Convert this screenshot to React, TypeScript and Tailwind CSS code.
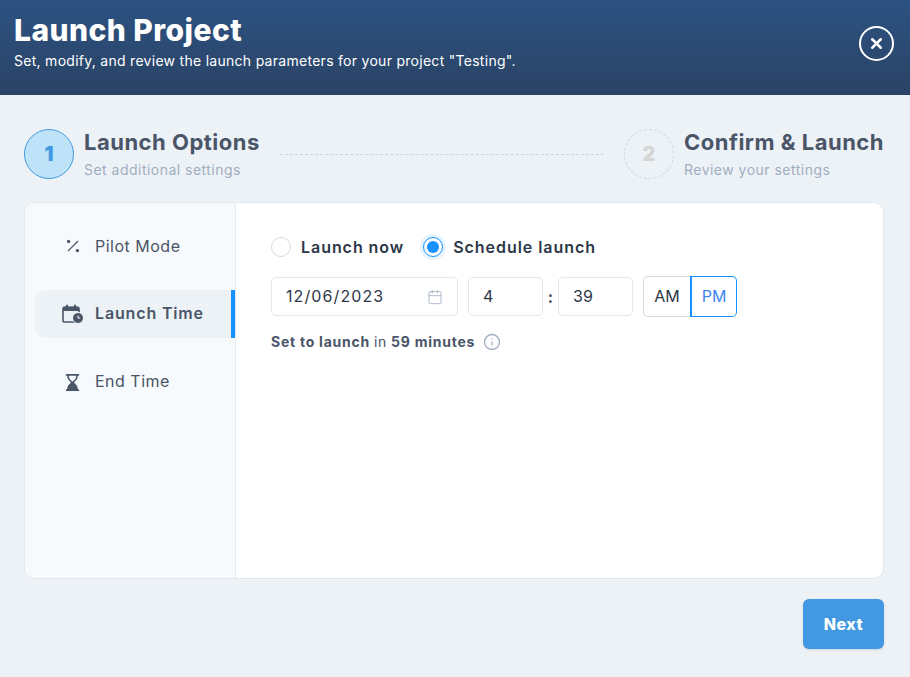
import { Calendar, Info, X } from 'lucide-react';

function PercentIcon() {
  return (
    <svg viewBox="0 0 16 16" className="w-[16px] h-[16px] text-[#4a5568]" fill="currentColor">
      <circle cx="3.6" cy="3.4" r="1.7" />
      <circle cx="12.4" cy="12.6" r="1.7" />
      <path d="M12.6 2.6l.9.9L3.4 13.6l-.9-.9z" />
    </svg>
  );
}

function CalendarClockIcon() {
  return (
    <svg viewBox="0 0 22 20" className="w-[22px] h-[20px]">
      <path d="M2 3.5h14a1 1 0 0 1 1 1V17a1 1 0 0 1-1 1H2a1 1 0 0 1-1-1V4.500a1 1 0 0 1 1-1z" fill="none" stroke="#4a5568" strokeWidth="1.600" />
      <path d="M1 3.500a1 1 0 0 1 1-1h14a1 1 0 0 1 1 1V7H1z" fill="#4a5568" />
      <rect x="4" y="0.500" width="2" height="4" rx="1" fill="#4a5568" />
      <rect x="12" y="0.500" width="2" height="4" rx="1" fill="#4a5568" />
      <circle cx="16" cy="14" r="5.500" fill="#4a5568" stroke="#f7fafc" strokeWidth="1" />
      <path d="M16 11.500V14h2.200" fill="none" stroke="#fff" strokeWidth="1" />
    </svg>
  );
}

function HourglassIcon() {
  return (
    <svg viewBox="0 0 16 20" className="w-[15px] h-[19px]">
      <path d="M1 1h14v1.800h-1.300c0 3-1.700 5.300-4.200 7.200 2.500 1.900 4.200 4.200 4.200 7.200H15V19H1v-1.800h1.300c0-3 1.700-5.300 4.200-7.200-2.500-1.900-4.200-4.200-4.200-7.200H1z" fill="#4a5568" />
      <path d="M4 2.800h8c0 2.700-1.600 4.700-4 6.200-2.400-1.500-4-3.500-4-6.200z" fill="#f7fafc" />
    </svg>
  );
}

function Step({ num, title, sub, active }: { num: string; title: string; sub: string; active?: boolean }) {
  return (
    <div className="flex items-center gap-[10px]">
      <div
        className={
          active
            ? 'w-[50px] h-[50px] rounded-full border border-[#4299e1] bg-[#bee3f8] text-[#4299e1] flex items-center justify-center text-[20px] font-black'
            : 'w-[50px] h-[50px] rounded-full border border-dashed border-[#cbd5e0] text-[#d4d4d4] flex items-center justify-center text-[20px] font-black'
        }
      >
        {num}
      </div>
      <div>
        <div className="text-[22px] leading-[26px] font-bold text-[#4a5568] tracking-[0.5px]">{title}</div>
        <div className="text-[14px] leading-[20px] mt-[5px] text-[#a0aec0] tracking-[0.48px]">{sub}</div>
      </div>
    </div>
  );
}

export default function App() {
  return (
    <div className="w-[910px] h-[677px] bg-[#edf2f7] flex flex-col font-['Inter','Liberation_Sans',sans-serif] overflow-hidden">
      <header className="h-[95px] shrink-0 bg-gradient-to-b from-[#2c5282] to-[#2a4365] pl-[14px] pr-[16px] flex items-start justify-between">
        <div>
          <h1 className="text-[30px] leading-[36px] font-extrabold text-white mt-[12px] tracking-[0.45px]">Launch Project</h1>
          <p className="text-[14px] leading-[20px] text-white mt-[3px] tracking-[0.28px]">
            Set, modify, and review the launch parameters for your project "Testing".
          </p>
        </div>
        <button className="w-[35px] h-[35px] mt-[26px] rounded-full border-[2px] border-white flex items-center justify-center text-white">
          <X size={17} strokeWidth={3.5} />
        </button>
      </header>

      <main className="flex-1 flex flex-col pl-[24px] pr-[26px] pt-[34px]">
        <div className="flex items-center h-[50px]">
          <Step num="1" title="Launch Options" sub="Set additional settings" active />
          <div className="flex-1 mx-[20px] border-t border-dashed border-[#cbd5e0]" />
          <Step num="2" title="Confirm & Launch" sub="Review your settings" />
        </div>

        <section className="mt-[23px] h-[377px] bg-white border border-[#e2e8f0] rounded-[10px] flex overflow-hidden">
          <nav className="w-[211px] shrink-0 bg-[#f7fafc] border-r border-[#e2e8f0] pt-[19px] pl-[10px]">
            <div className="h-[48px] flex items-center pl-[30px] gap-[14px] text-[16px] text-[#4a5568] tracking-[0.5px]">
              <PercentIcon />
              <span>Pilot Mode</span>
            </div>
            <div className="mt-[20px] h-[48px] flex items-center pl-[27px] gap-[11px] text-[16px] font-semibold text-[#4a5568] bg-[#edf2f7] rounded-l-[10px] border-r-[4px] border-[#1890ff] tracking-[0.85px]">
              <CalendarClockIcon />
              <span className="mb-[2px]">Launch Time</span>
            </div>
            <div className="mt-[20px] h-[48px] flex items-center pl-[30px] gap-[15px] text-[16px] text-[#4a5568] tracking-[0.5px]">
              <HourglassIcon />
              <span className="mb-[2px]">End Time</span>
            </div>
          </nav>

          <div className="flex-1 pl-[35px] pt-[33px]">
            <div className="flex items-center h-[22px] text-[16px] font-semibold text-[#2d3748] tracking-[0.95px]">
              <span className="w-[20px] h-[20px] rounded-full border border-[#d9d9d9] bg-white" />
              <span className="ml-[10px]">Launch now</span>
              <span className="ml-[19px] w-[20px] h-[20px] rounded-full border border-[#1890ff] bg-white flex items-center justify-center shadow-[0_0_0_3px_#e6f4ff]">
                <span className="w-[12px] h-[12px] rounded-full bg-[#1890ff]" />
              </span>
              <span className="ml-[10px]">Schedule launch</span>
            </div>

            <div className="flex items-center mt-[18px] text-[16px] text-[#2d3748]">
              <div className="w-[187px] h-[39px] rounded-[5px] border border-[#e2e8f0] flex items-center justify-between pl-[14px] pr-[14px] pb-[2px]">
                <span className="tracking-[1.1px]">12/06/2023</span>
                <Calendar size={16} strokeWidth={1.25} className="text-[#a0aec0] mt-[2px]" />
              </div>
              <div className="ml-[10px] w-[75px] h-[39px] rounded-[5px] border border-[#e2e8f0] flex items-center pl-[14px] pb-[2px]">4</div>
              <span className="w-[15px] text-center font-bold text-[#4a5568]">:</span>
              <div className="w-[75px] h-[39px] rounded-[5px] border border-[#e2e8f0] flex items-center pl-[14px] pb-[2px]">39</div>
              <div className="ml-[10px] flex h-[41px]">
                <div className="w-[47px] rounded-l-[5px] border border-r-0 border-[#d9d9d9] flex items-center justify-center pb-[2px]">AM</div>
                <div className="w-[47px] rounded-r-[5px] border border-[#1890ff] border-l-2 flex items-center justify-center text-[#4285f4] pb-[2px]">PM</div>
              </div>
            </div>

            <div className="mt-[15px] flex items-center text-[14px] leading-[20px] text-[#4a5568] tracking-[0.75px]">
              <span className="font-bold">Set to launch</span>
              <span className="ml-[4px]">in</span>
              <span className="ml-[4px] font-bold">59 minutes</span>
              <Info size={18} strokeWidth={1.75} className="ml-[8px] text-[#a0aec0]" />
            </div>
          </div>
        </section>

        <div className="flex justify-end mt-[20px]">
          <button className="w-[81px] h-[50px] rounded-[6px] bg-[#4299e1] text-white text-[16px] font-extrabold tracking-[0.5px] shadow-sm">Next</button>
        </div>
      </main>
    </div>
  );
}
